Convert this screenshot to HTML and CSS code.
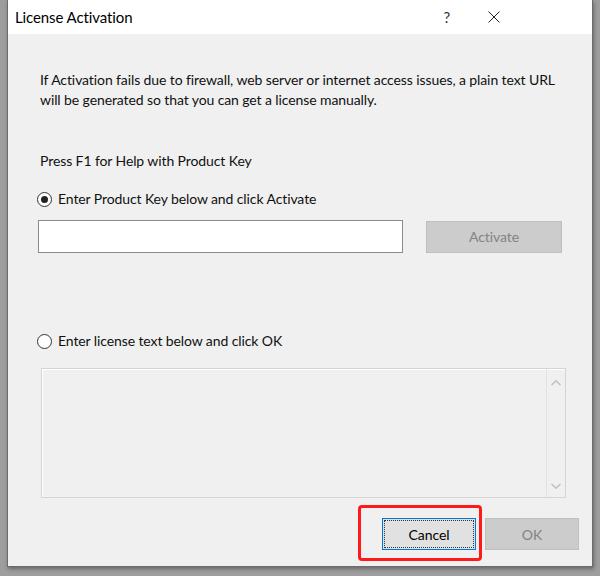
FILE: index.html
```html
<!DOCTYPE html>
<html>
<head>
<meta charset="utf-8">
<link rel="stylesheet" href="styles.css">
</head>
<body>
<div class="window">
  <div class="titlebar">
    <span class="title">License Activation</span>
    <span class="help">?</span>
    <svg class="close" width="12" height="12" viewBox="0 0 12 12"><path d="M0.5 0.5L11.5 11.5M11.5 0.5L0.5 11.5" stroke="#222" stroke-width="1" fill="none"/></svg>
  </div>
  <div class="content">
    <p class="info">If Activation fails due to firewall, web server or internet access issues, a plain text URL<br>will be generated so that you can get a license manually.</p>
    <p class="hint">Press F1 for Help with Product Key</p>
    <label class="radio-row first"><span class="radio checked"></span><span>Enter Product Key below and click Activate</span></label>
    <div class="key-row">
      <div class="input"></div>
      <div class="btn disabled activate">Activate</div>
    </div>
    <label class="radio-row second"><span class="radio"></span><span>Enter license text below and click OK</span></label>
    <div class="textarea">
      <div class="ta-body"></div>
      <div class="scrollbar">
        <svg width="12" height="8" viewBox="0 0 12 8"><path d="M1.5 6L6 1.8L10.5 6" stroke="#c2c2c2" stroke-width="1.6" fill="none"/></svg>
        <svg width="12" height="8" viewBox="0 0 12 8"><path d="M1.5 2L6 6.2L10.5 2" stroke="#c2c2c2" stroke-width="1.6" fill="none"/></svg>
      </div>
    </div>
    <div class="footer">
      <div class="btn cancel">Cancel<span class="highlight"></span></div>
      <div class="btn disabled ok">OK</div>
    </div>
  </div>
</div>
</body>
</html>
```

FILE: styles.css
```css
html, body {
  margin: 0;
  padding: 0;
}
body {
  background: #9e9e9e;
  width: 600px;
  height: 576px;
  overflow: hidden;
  font-family: "Lato", "Noto Sans", sans-serif;
  font-size: 14px;
  letter-spacing: -0.1px;
  color: #111111;
}
.window {
  margin-left: 7px;
  width: 584px;
  height: 566px;
  background: #f0f0f0;
  border: 1px solid #6b6b6b;
  border-top: none;
  box-shadow: 1px 2px 4px rgba(0,0,0,0.35);
  display: flex;
  flex-direction: column;
}
.titlebar {
  height: 34px;
  background: #ffffff;
  display: flex;
  align-items: center;
  border-top: 1px solid #ffffff;
  padding-bottom: 2px;
  box-sizing: border-box;
}
.title {
  margin-left: 7px;
  font-size: 15px;
  color: #000;
  flex: 1;
}
.help {
  font-size: 15px;
  color: #333;
  margin-right: 38px;
}
.titlebar .close {
  margin-right: 92px;
}
.content {
  flex: 1;
  padding: 0 13px 0 32px;
  display: flex;
  flex-direction: column;
}
.info {
  margin: 36px 0 0 0;
  line-height: 20px;
  white-space: nowrap;
}
.hint {
  margin: 41px 0 0 0;
  line-height: 20px;
}
.radio-row {
  display: flex;
  align-items: center;
  line-height: 20px;
}
.radio-row.first { margin: 18px 0 0 -3px; }
.radio-row.second { margin: 78px 0 0 -3px; }
.radio {
  width: 13px;
  height: 13px;
  border: 1px solid #333;
  border-radius: 50%;
  background: #fff;
  margin-right: 6px;
  box-sizing: content-box;
  display: flex;
  align-items: center;
  justify-content: center;
}
.radio.checked::after {
  content: "";
  width: 7px;
  height: 7px;
  border-radius: 50%;
  background: #222;
}
.key-row {
  display: flex;
  align-items: center;
  margin: 11px 0 0 -2px;
}
.input {
  width: 363px;
  height: 31px;
  background: #fff;
  border: 1px solid #8a8a8a;
}
.btn {
  display: flex;
  align-items: center;
  justify-content: center;
  box-sizing: border-box;
  height: 32px;
  font-size: 14px;
}
.btn.disabled {
  background: #cccccc;
  border: 1px solid #bfbfbf;
  color: #838383;
}
.activate {
  width: 136px;
  margin-left: 23px;
  height: 32px;
}
.textarea {
  margin: 17px 0 0 1px;
  width: 525px;
  height: 130px;
  box-sizing: border-box;
  border: 1px solid #d4d4d4;
  box-shadow: inset 1px 1px 0 #ffffff;
  display: flex;
}
.ta-body { flex: 1; }
.scrollbar {
  width: 18px;
  border-left: 1px solid #e2e2e2;
  display: flex;
  flex-direction: column;
  justify-content: space-between;
  align-items: center;
  padding: 10px 0 7px;
}
.footer {
  display: flex;
  justify-content: flex-end;
  margin-top: 20px;
  gap: 9px;
}
.cancel {
  position: relative;
  width: 94px;
  background: #e1e1e1;
  border: 1px solid #0078d7;
  outline: 1px dotted #333;
  outline-offset: -3px;
  color: #000;
}
.ok {
  width: 94px;
}
.highlight {
  position: absolute;
  left: -25px;
  top: -14px;
  width: 118px;
  height: 50px;
  border: 3px solid #ff1a1a;
  border-radius: 4px;
}
```
